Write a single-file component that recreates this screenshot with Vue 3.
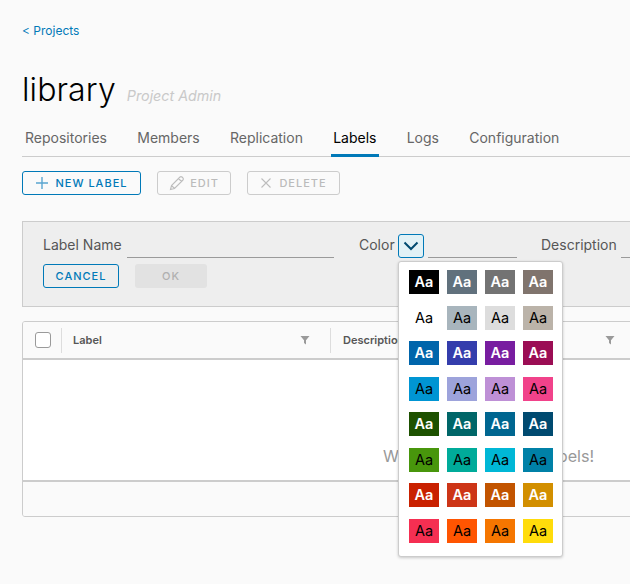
<script setup>
const tabs = ['Repositories', 'Members', 'Replication', 'Labels', 'Logs', 'Configuration']

const colors = [
  ['#000000', '#fff'], ['#61717d', '#fff'], ['#737373', '#fff'], ['#80746d', '#fff'],
  ['#ffffff', '#000'], ['#a8b5bd', '#000'], ['#dddddd', '#000'], ['#bbb3a9', '#000'],
  ['#0065ab', '#fff'], ['#343dac', '#fff'], ['#781da0', '#fff'], ['#9b0d54', '#fff'],
  ['#0095d3', '#000'], ['#9da3db', '#000'], ['#be90d6', '#000'], ['#f1428a', '#000'],
  ['#1d5100', '#fff'], ['#006668', '#fff'], ['#006690', '#fff'], ['#004a70', '#fff'],
  ['#48960c', '#000'], ['#00ab9a', '#000'], ['#00b7d6', '#000'], ['#0081a7', '#000'],
  ['#c92100', '#fff'], ['#cd3517', '#fff'], ['#c25400', '#fff'], ['#d28f00', '#fff'],
  ['#f52f52', '#000'], ['#ff5501', '#000'], ['#f57600', '#000'], ['#ffdc0b', '#000']
]
</script>

<template>
  <div class="page">
    <a class="back">&lt; Projects</a>
    <div class="title-row">
      <h1 class="title">library</h1>
      <span class="role">Project Admin</span>
    </div>

    <nav class="tabs">
      <span v-for="tab in tabs" :key="tab" class="tab" :class="{ active: tab === 'Labels' }">{{ tab }}</span>
    </nav>

    <div class="actions">
      <button class="btn primary new-btn">
        <svg width="14" height="14" viewBox="0 0 14 14"><path d="M7 1v12M1 7h12" stroke="#5aa5d0" stroke-width="1.4" fill="none" /></svg>
        NEW LABEL
      </button>
      <button class="btn off edit-btn">
        <svg width="16" height="16" viewBox="0 0 16 16"><path d="M1.500 14.500l1-4L11 2a1.500 1.500 0 0 1 2 0l1 1a1.500 1.500 0 0 1 0 2l-8.500 8.500zM2.500 10.500l3 3M9.500 3.500l3 3" stroke="#bdbdbd" stroke-width="1.100" fill="none" /></svg>
        EDIT
      </button>
      <button class="btn off delete-btn">
        <svg width="12" height="12" viewBox="0 0 12 12"><path d="M1.500 1.500l9 9M10.500 1.500l-9 9" stroke="#bdbdbd" stroke-width="1.100" fill="none" /></svg>
        DELETE
      </button>
    </div>

    <section class="form-panel">
      <div class="form-row">
        <label class="field-label">Label Name</label>
        <span class="line name-line"></span>
        <label class="field-label color-label">Color</label>
        <div class="color-picker">
          <button class="chevron">
            <svg width="16" height="10" viewBox="0 0 16 10"><path d="M1.500 1.500L8 8l6.500-6.500" stroke="#004a70" stroke-width="2" fill="none" /></svg>
          </button>
          <div class="palette">
            <span
              v-for="c in colors"
              :key="c[0]"
              class="swatch"
              :class="{ light: c[1] === '#fff' }"
              :style="{ background: c[0], color: c[1] }"
            >Aa</span>
          </div>
        </div>
        <span class="line color-line"></span>
        <label class="field-label desc-label">Description</label>
        <span class="line desc-line"></span>
      </div>
      <div class="form-buttons">
        <button class="btn primary cancel-btn">CANCEL</button>
        <button class="btn ok-btn">OK</button>
      </div>
    </section>

    <section class="grid">
      <div class="grid-head">
        <span class="check-cell"><span class="checkbox"></span></span>
        <span class="col label-col">
          Label
          <svg class="funnel" width="10" height="10" viewBox="0 0 10 10"><path d="M0.500 1h9L6 5.200V9.500L4 8V5.200z" fill="#9a9a9a" /></svg>
        </span>
        <span class="col desc-col">
          Description
          <svg class="funnel" width="10" height="10" viewBox="0 0 10 10"><path d="M0.500 1h9L6 5.200V9.500L4 8V5.200z" fill="#9a9a9a" /></svg>
        </span>
      </div>
      <div class="grid-body">We couldn't find any labels!</div>
      <div class="grid-foot"></div>
    </section>
  </div>
</template>

<style scoped>
.page {
  width: 630px;
  height: 584px;
  overflow: hidden;
  box-sizing: border-box;
  padding: 23px 0 0 22px;
  background: #fafafa;
  font-family: Inter, "Noto Sans", sans-serif;
  color: #565656;
}

.back {
  display: block;
  font-size: 12px;
  line-height: 16px;
  color: #0079b8;
}

.title-row {
  display: flex;
  align-items: baseline;
  margin-top: 29px;
}

.title {
  margin: 0;
  font-size: 32px;
  font-weight: 300;
  line-height: 44px;
  color: #000;
  letter-spacing: 0.1px;
}

.role {
  margin-left: 11px;
  font-size: 14.3px;
  font-style: italic;
  color: #c9c9c9;
}

.tabs {
  display: flex;
  gap: 30.25px;
  margin-top: 6px;
  padding-left: 3px;
  height: 38px;
  border-bottom: 1px solid #ccc;
}

.tab {
  position: relative;
  font-size: 14px;
  line-height: 39px;
  color: #666;
  white-space: nowrap;
}

.tab.active {
  color: #000;
}

.tab.active::after {
  content: '';
  position: absolute;
  left: -2px;
  right: -3px;
  bottom: -1px;
  height: 3px;
  background: #0079b8;
}

.actions {
  display: flex;
  gap: 16px;
  margin-top: 14px;
}

.btn {
  display: flex;
  align-items: center;
  justify-content: center;
  box-sizing: border-box;
  height: 24px;
  padding: 0;
  border-radius: 3px;
  font-family: inherit;
  font-size: 11px;
  font-weight: 500;
  letter-spacing: 1px;
  background: transparent;
}

.primary {
  border: 1px solid #0079b8;
  color: #0079b8;
}

.off {
  border: 1px solid #ccc;
  color: #bbb;
  gap: 5px;
}

.new-btn {
  width: 119px;
  gap: 6px;
}

.edit-btn {
  width: 74px;
}

.delete-btn {
  width: 93px;
  gap: 7px;
}

.form-panel {
  box-sizing: border-box;
  width: 700px;
  height: 86px;
  margin-top: 26px;
  padding: 12px 20px 0;
  background: #eee;
  border: 1px solid #ccc;
}

.form-row {
  display: flex;
  align-items: flex-end;
  height: 24px;
}

.field-label {
  width: 84px;
  margin-bottom: 2px;
  font-size: 14px;
  line-height: 23px;
  color: #565656;
  white-space: nowrap;
}

.line {
  height: 1px;
  background: #9a9a9a;
}

.name-line {
  width: 207px;
}

.color-label {
  width: 39px;
  margin-left: 25px;
}

.color-picker {
  position: relative;
  width: 26px;
  height: 24px;
}

.chevron {
  display: flex;
  align-items: center;
  justify-content: center;
  box-sizing: border-box;
  width: 26px;
  height: 24px;
  padding: 0;
  background: #e1f1f6;
  border: 1px solid #0079b8;
  border-radius: 3px;
}

.palette {
  position: absolute;
  top: 27px;
  left: 0;
  z-index: 5;
  box-sizing: border-box;
  width: 165px;
  height: 296px;
  padding: 8px 10px 0;
  display: grid;
  grid-template-columns: repeat(4, 30px);
  grid-auto-rows: 24px;
  column-gap: 8px;
  row-gap: 11.5px;
  background: #fff;
  border: 1px solid #ccc;
  border-radius: 3px;
  box-shadow: 0 1px 3px rgb(0 0 0 / 0.2);
}

.swatch {
  font-size: 14.5px;
  line-height: 24px;
  text-align: center;
}

.swatch.light {
  font-weight: 600;
}

.color-line {
  width: 89px;
  margin-left: 4px;
}

.desc-label {
  width: 80px;
  margin-left: 24px;
}

.desc-line {
  width: 60px;
}

.form-buttons {
  display: flex;
  gap: 16px;
  margin-top: 6px;
}

.cancel-btn {
  width: 76px;
}

.ok-btn {
  width: 72px;
  border: none;
  background: #e2e2e2;
  color: #b0b0b0;
}

.grid {
  box-sizing: border-box;
  width: 700px;
  margin-top: 14px;
  border: 1px solid #ccc;
  border-radius: 3px;
  overflow: hidden;
}

.grid-head {
  display: flex;
  align-items: center;
  height: 36px;
  border-bottom: 2px solid #ccc;
  background: #fafafa;
  font-size: 11px;
  font-weight: 600;
  color: #565656;
}

.check-cell {
  display: flex;
  align-items: center;
  justify-content: center;
  box-sizing: border-box;
  width: 39px;
  height: 25px;
  padding-left: 1px;
  border-right: 1px solid #ddd;
}

.checkbox {
  box-sizing: border-box;
  width: 16px;
  height: 16px;
  background: #fff;
  border: 1px solid #9a9a9a;
  border-radius: 3px;
}

.col {
  display: flex;
  align-items: center;
  justify-content: space-between;
  box-sizing: border-box;
  height: 25px;
  padding: 0 20px 0 11px;
}

.label-col {
  width: 269px;
  border-right: 1px solid #ddd;
}

.desc-col {
  width: 299px;
  padding: 0 15px 0 12px;
}

.grid-body {
  box-sizing: border-box;
  height: 120px;
  padding: 86px 0 0 360px;
  background: #fff;
  font-size: 16.2px;
  line-height: 20px;
  color: #999;
  white-space: nowrap;
}

.grid-foot {
  height: 34px;
  border-top: 2px solid #ccc;
  background: #fafafa;
}
</style>

<style>
body {
  background: #fafafa;
}
</style>
